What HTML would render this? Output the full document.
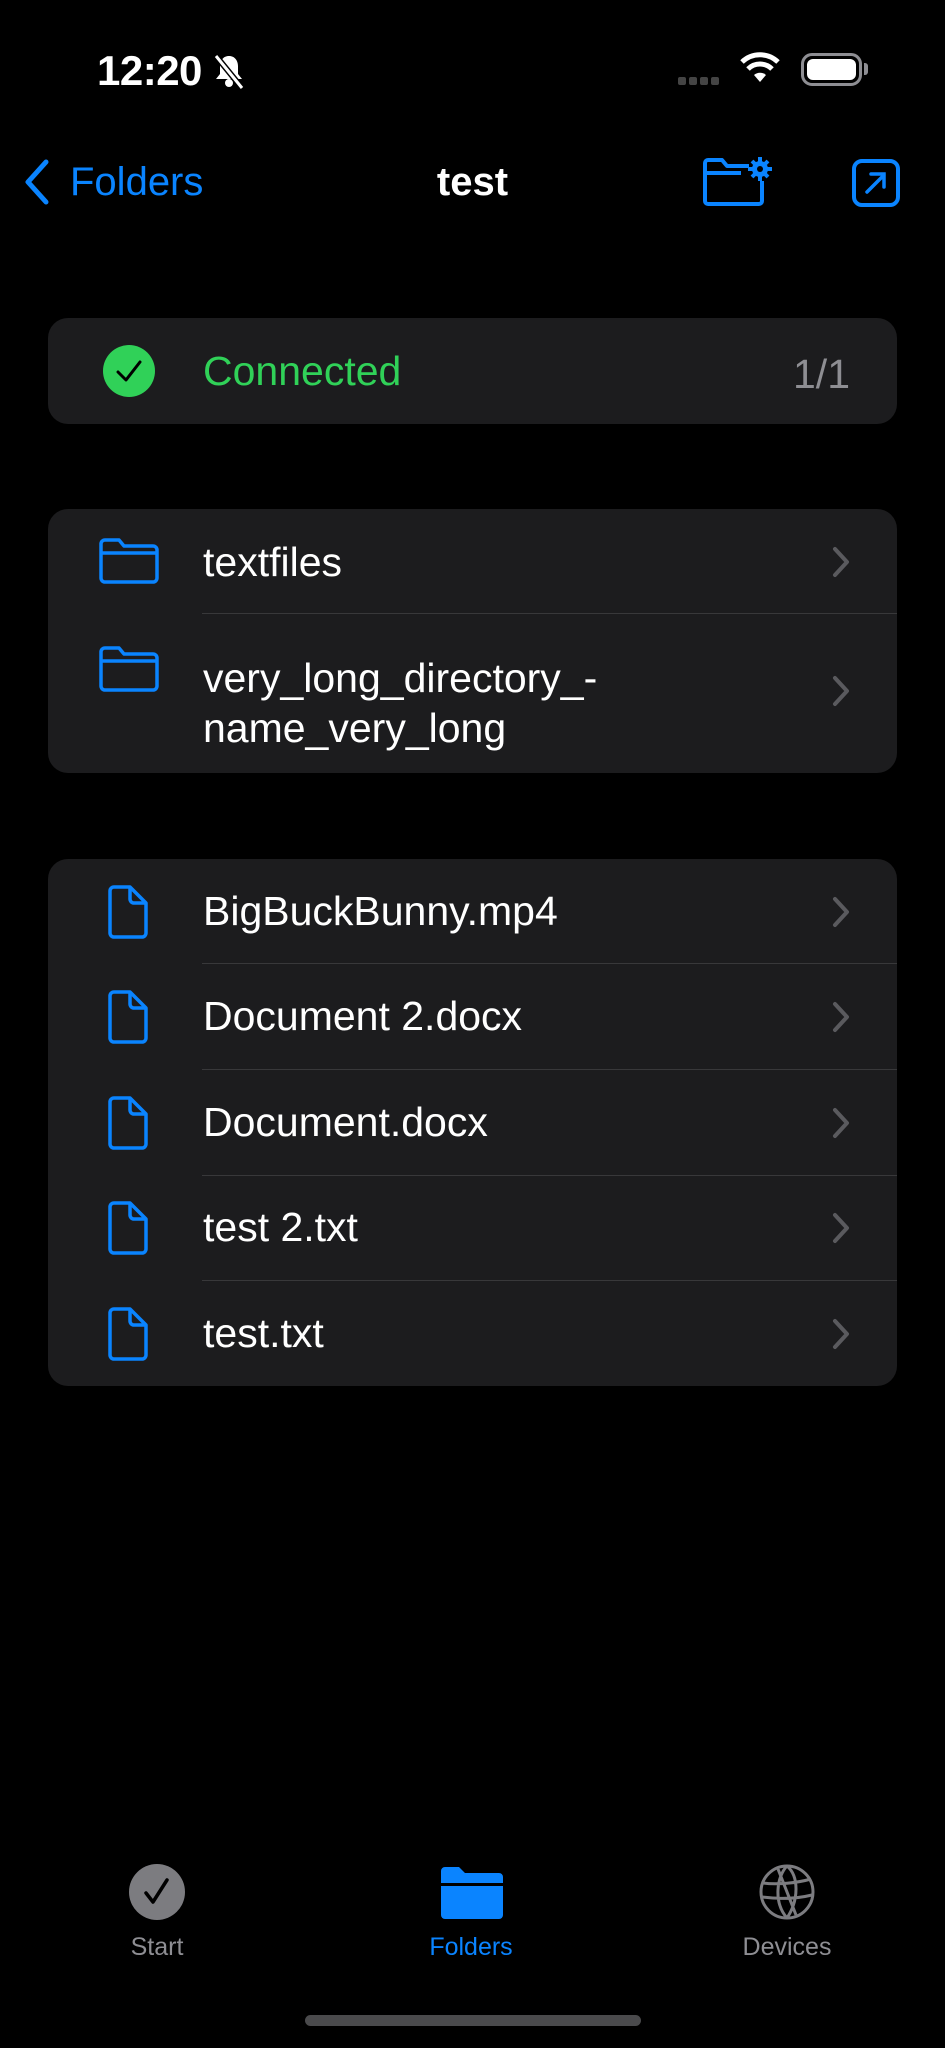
<!DOCTYPE html>
<html><head><meta charset="utf-8"><style>
*{margin:0;padding:0;box-sizing:border-box}
body{width:945px;height:2048px;background:#000;font-family:"Liberation Sans",sans-serif;color:#fff;position:relative;overflow:hidden}
.a{position:absolute}
.card{position:absolute;left:48px;width:849px;background:#1c1c1e;border-radius:20px}
.t{position:absolute;left:155px;font-size:41px;color:#fff;line-height:1}
.sep{position:absolute;left:154px;right:0;height:1px;background:#38383a}
.chev{position:absolute;left:783px}
.ic{position:absolute;left:50px}
</style></head><body>
<div class="a" style="left:97px;top:47px;font-size:42px;font-weight:700;letter-spacing:-0.5px">12:20</div>
<svg class="a" style="left:212px;top:52px" width="34" height="38" viewBox="0 0 34 38"><path d="M17 4c-6 0-9 5-9 10v8l-4 5h26l-4-5v-8c0-5-3-10-9-10z" fill="#fff"/><circle cx="17" cy="31" r="4" fill="#fff"/><line x1="4" y1="4" x2="30" y2="36" stroke="#000" stroke-width="6"/><line x1="4" y1="4" x2="30" y2="36" stroke="#fff" stroke-width="3"/></svg>
<div class="a" style="left:678px;top:77px;width:8px;height:8px;border-radius:2px;background:#444;box-shadow:11px 0 #444,22px 0 #444,33px 0 #444"></div>
<svg class="a" style="left:740px;top:52px" width="40" height="32" viewBox="0 0 40 32"><path d="M20 30l-6-7a9 9 0 0 1 12 0z" fill="#fff"/><path d="M8 17a17 17 0 0 1 24 0" stroke="#fff" stroke-width="5" fill="none"/><path d="M2 10a26 26 0 0 1 36 0" stroke="#fff" stroke-width="5" fill="none"/></svg>
<div class="a" style="left:801px;top:53px;width:61px;height:33px;border:3px solid #8e8e93;border-radius:11px;padding:3px"><div style="width:100%;height:100%;background:#fff;border-radius:6px"></div></div>
<div class="a" style="left:864px;top:63px;width:4px;height:12px;background:#8e8e93;border-radius:0 3px 3px 0"></div>
<svg class="a" style="left:22px;top:158px" width="30" height="48" viewBox="0 0 30 48"><path d="M24 4L6 24l18 20" stroke="#0a84ff" stroke-width="5" fill="none" stroke-linecap="round" stroke-linejoin="round"/></svg>
<div class="a" style="left:70px;top:160px;font-size:40px;color:#0a84ff">Folders</div>
<div class="a" style="left:0;width:945px;text-align:center;top:160px;font-size:40px;font-weight:700">test</div>
<svg class="a" style="left:702px;top:155px" width="74" height="52" viewBox="0 0 74 52"><path d="M3 8a3 3 0 0 1 3-3h14l5 6h22M3 8v38a3 3 0 0 0 3 3h51a3 3 0 0 0 3-3V26M3 18h36" stroke="#0a84ff" stroke-width="4" fill="none" stroke-linejoin="round"/><circle cx="58" cy="14" r="8" fill="#0a84ff"/><g stroke="#0a84ff" stroke-width="4"><line x1="58" y1="2" x2="58" y2="26"/><line x1="46" y1="14" x2="70" y2="14"/><line x1="50" y1="6" x2="66" y2="22"/><line x1="66" y1="6" x2="50" y2="22"/></g><circle cx="58" cy="14" r="3" fill="#000"/></svg>
<svg class="a" style="left:851px;top:158px" width="50" height="50" viewBox="0 0 50 50"><rect x="3" y="3" width="44" height="44" rx="8" stroke="#0a84ff" stroke-width="4" fill="none"/><path d="M16 34l17-17M20 16h13v13" stroke="#0a84ff" stroke-width="3.5" fill="none" stroke-linecap="round"/></svg>
<div class="card" style="top:318px;height:106px">
<svg class="a" style="left:55px;top:27px" width="52" height="52" viewBox="0 0 52 52"><circle cx="26" cy="26" r="26" fill="#30d158"/><path d="M15 27l8 8 14-18" stroke="#000" stroke-width="3" fill="none" stroke-linecap="round" stroke-linejoin="round"/></svg>
<div class="t" style="top:33px;color:#30d158">Connected</div>
<div class="a" style="right:47px;top:33px;font-size:41px;color:#8e8e93">1/1</div>
</div>
<div class="card" style="top:509px;height:264px">
<svg class="ic" style="top:28px" width="62" height="48" viewBox="0 0 62 48"><path d="M3 7a4 4 0 0 1 4-4h14l5 6h29a4 4 0 0 1 4 4v28a4 4 0 0 1-4 4H7a4 4 0 0 1-4-4zM3 16h56" stroke="#0a84ff" stroke-width="3.5" fill="none" stroke-linejoin="round"/></svg>
<div class="t" style="top:33px">textfiles</div>
<svg class="chev" style="top:37px" width="20" height="32" viewBox="0 0 20 32"><path d="M4 3l12 13L4 29" stroke="#5a5a5e" stroke-width="4" fill="none" stroke-linecap="round" stroke-linejoin="round"/></svg>
<div class="sep" style="top:104px"></div>
<svg class="ic" style="top:136px" width="62" height="48" viewBox="0 0 62 48"><path d="M3 7a4 4 0 0 1 4-4h14l5 6h29a4 4 0 0 1 4 4v28a4 4 0 0 1-4 4H7a4 4 0 0 1-4-4zM3 16h56" stroke="#0a84ff" stroke-width="3.5" fill="none" stroke-linejoin="round"/></svg>
<div class="t" style="top:144px;line-height:50px">very_long_directory_-<br>name_very_long</div>
<svg class="chev" style="top:166px" width="20" height="32" viewBox="0 0 20 32"><path d="M4 3l12 13L4 29" stroke="#5a5a5e" stroke-width="4" fill="none" stroke-linecap="round" stroke-linejoin="round"/></svg>
</div>
<div class="card" style="top:859px;height:527px">
  <div class="a" style="left:0;top:0;width:100%;height:105px">
    <svg class="a" style="left:58px;top:26px" width="44" height="54" viewBox="0 0 44 54"><path d="M4 6a4 4 0 0 1 4-4h16l16 16v30a4 4 0 0 1-4 4H8a4 4 0 0 1-4-4zM24 2v12a4 4 0 0 0 4 4h12" stroke="#0a84ff" stroke-width="3.5" fill="none" stroke-linejoin="round"/></svg>
    <div class="t" style="top:32px">BigBuckBunny.mp4</div>
    <svg class="chev" style="top:37px" width="20" height="32" viewBox="0 0 20 32"><path d="M4 3l12 13L4 29" stroke="#5a5a5e" stroke-width="4" fill="none" stroke-linecap="round" stroke-linejoin="round"/></svg>
    <div class="sep" style="top:104px"></div>
  </div>
  <div class="a" style="left:0;top:105px;width:100%;height:105px">
    <svg class="a" style="left:58px;top:26px" width="44" height="54" viewBox="0 0 44 54"><path d="M4 6a4 4 0 0 1 4-4h16l16 16v30a4 4 0 0 1-4 4H8a4 4 0 0 1-4-4zM24 2v12a4 4 0 0 0 4 4h12" stroke="#0a84ff" stroke-width="3.5" fill="none" stroke-linejoin="round"/></svg>
    <div class="t" style="top:32px">Document 2.docx</div>
    <svg class="chev" style="top:37px" width="20" height="32" viewBox="0 0 20 32"><path d="M4 3l12 13L4 29" stroke="#5a5a5e" stroke-width="4" fill="none" stroke-linecap="round" stroke-linejoin="round"/></svg>
    <div class="sep" style="top:105px"></div>
  </div>
  <div class="a" style="left:0;top:211px;width:100%;height:105px">
    <svg class="a" style="left:58px;top:26px" width="44" height="54" viewBox="0 0 44 54"><path d="M4 6a4 4 0 0 1 4-4h16l16 16v30a4 4 0 0 1-4 4H8a4 4 0 0 1-4-4zM24 2v12a4 4 0 0 0 4 4h12" stroke="#0a84ff" stroke-width="3.5" fill="none" stroke-linejoin="round"/></svg>
    <div class="t" style="top:32px">Document.docx</div>
    <svg class="chev" style="top:37px" width="20" height="32" viewBox="0 0 20 32"><path d="M4 3l12 13L4 29" stroke="#5a5a5e" stroke-width="4" fill="none" stroke-linecap="round" stroke-linejoin="round"/></svg>
    <div class="sep" style="top:105px"></div>
  </div>
  <div class="a" style="left:0;top:316px;width:100%;height:105px">
    <svg class="a" style="left:58px;top:26px" width="44" height="54" viewBox="0 0 44 54"><path d="M4 6a4 4 0 0 1 4-4h16l16 16v30a4 4 0 0 1-4 4H8a4 4 0 0 1-4-4zM24 2v12a4 4 0 0 0 4 4h12" stroke="#0a84ff" stroke-width="3.5" fill="none" stroke-linejoin="round"/></svg>
    <div class="t" style="top:32px">test 2.txt</div>
    <svg class="chev" style="top:37px" width="20" height="32" viewBox="0 0 20 32"><path d="M4 3l12 13L4 29" stroke="#5a5a5e" stroke-width="4" fill="none" stroke-linecap="round" stroke-linejoin="round"/></svg>
    <div class="sep" style="top:105px"></div>
  </div>
  <div class="a" style="left:0;top:422px;width:100%;height:105px">
    <svg class="a" style="left:58px;top:26px" width="44" height="54" viewBox="0 0 44 54"><path d="M4 6a4 4 0 0 1 4-4h16l16 16v30a4 4 0 0 1-4 4H8a4 4 0 0 1-4-4zM24 2v12a4 4 0 0 0 4 4h12" stroke="#0a84ff" stroke-width="3.5" fill="none" stroke-linejoin="round"/></svg>
    <div class="t" style="top:32px">test.txt</div>
    <svg class="chev" style="top:37px" width="20" height="32" viewBox="0 0 20 32"><path d="M4 3l12 13L4 29" stroke="#5a5a5e" stroke-width="4" fill="none" stroke-linecap="round" stroke-linejoin="round"/></svg>
  </div>
</div>
<svg class="a" style="left:128px;top:1863px" width="58" height="58" viewBox="0 0 58 58"><circle cx="29" cy="29" r="28" fill="#7c7c80"/><path d="M18 30l7 9 14-22" stroke="#000" stroke-width="3.5" fill="none" stroke-linecap="round" stroke-linejoin="round"/></svg>
<div class="a" style="left:57px;width:200px;text-align:center;top:1933px;font-size:25px;color:#8e8e93">Start</div>
<svg class="a" style="left:440px;top:1866px" width="64" height="54" viewBox="0 0 64 54"><path d="M1 5a4 4 0 0 1 4-4h14l6 6h34a4 4 0 0 1 4 4v6H1z" fill="#0a84ff"/><path d="M1 20h62v29a4 4 0 0 1-4 4H5a4 4 0 0 1-4-4z" fill="#0a84ff"/></svg>
<div class="a" style="left:371px;width:200px;text-align:center;top:1933px;font-size:25px;color:#0a84ff">Folders</div>
<svg class="a" style="left:758px;top:1863px" width="58" height="58" viewBox="0 0 58 58"><g stroke="#7c7c80" stroke-width="3" fill="none"><circle cx="29" cy="29" r="26"/><path d="M29 3c-10 10-14 36 0 52M29 3c12 10 12 34 0 52M5 20c14 2 34 0 48-4M4 34c16 2 34 2 50-2M20 6l18 46"/></g></svg>
<div class="a" style="left:687px;width:200px;text-align:center;top:1933px;font-size:25px;color:#8e8e93">Devices</div>
<div class="a" style="left:305px;top:2015px;width:336px;height:11px;border-radius:6px;background:#4a4a4c"></div>
</body></html>
